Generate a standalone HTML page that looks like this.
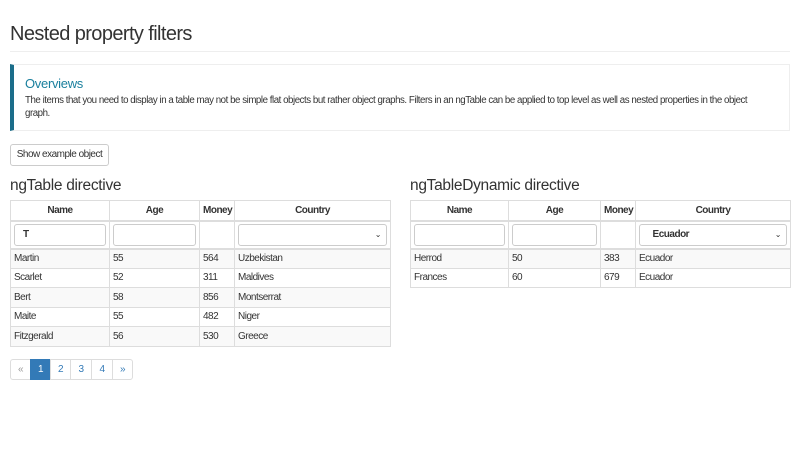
<!DOCTYPE html>
<html><head><style>
*{box-sizing:border-box;margin:0;padding:0}
body{width:800px;height:450px;background:#fff;font-family:"Liberation Sans",sans-serif;color:#333;position:relative;overflow:hidden;font-size:10px;letter-spacing:-0.5px}
.a{position:absolute}
h1{position:absolute;left:10px;top:23px;font-size:20px;letter-spacing:-0.6px;font-weight:normal;color:#333;white-space:nowrap}
.hr{left:10px;top:51px;width:780px;height:1px;background:#eee}
.call{left:10px;top:64px;width:780px;height:67px;border:1px solid #eee;border-left:4px solid #1b6d8a}
.call .t{position:absolute;left:11px;top:11px;font-size:13px;letter-spacing:-0.3px;color:#1b809e}
.call .p{position:absolute;left:11px;top:29px;font-size:9.7px;letter-spacing:-0.45px;line-height:13px;width:748px;color:#333}
.btn{left:10px;top:144px;width:99px;height:22px;border:1px solid #ccc;border-radius:3px;font-size:10px;line-height:20px;text-align:center;white-space:nowrap}
h3{position:absolute;font-size:15.5px;letter-spacing:-0.3px;font-weight:normal;top:177px;white-space:nowrap}
table{position:absolute;border-collapse:collapse;font-size:10px;table-layout:fixed}
td,th{border:1px solid #ddd;padding:0 3px;height:19.5px;white-space:nowrap;overflow:hidden}
th{text-align:center;font-weight:bold;height:20px;border-bottom:2px solid #ddd}
tr.f td{height:28px;padding:0 3px;border-bottom:2px solid #ddd}
tbody tr:nth-child(odd) td{background:#f9f9f9}
tbody tr:nth-child(even) td{background:#fff}
.in{height:22px;border:1px solid #ccc;border-radius:3px;background:#fff;position:relative;font-size:10px;line-height:20px;padding-left:8px;font-weight:bold}
.in .ch{position:absolute;right:5px;top:0;font-size:8px;font-weight:normal}
.pg{top:359px;height:21px;border:1px solid #ddd;text-align:center;line-height:19px;color:#337ab7;font-size:10px}
</style></head><body>
<h1>Nested property filters</h1>
<div class="a hr"></div>
<div class="a call"><div class="t">Overviews</div><div class="p">The items that you need to display in a table may not be simple flat objects but rather object graphs. Filters in an ngTable can be applied to top level as well as nested properties in the object graph.</div></div>
<div class="a btn">Show example object</div>
<h3 style="left:10px">ngTable directive</h3>
<h3 style="left:410px">ngTableDynamic directive</h3>
<table style="left:10px;top:200px;width:380px">
<colgroup><col style="width:99px"><col style="width:90px"><col style="width:35px"><col style="width:156px"></colgroup>
<thead><tr><th>Name</th><th>Age</th><th>Money</th><th>Country</th></tr>
<tr class="f"><td><div class="in">T</div></td><td><div class="in"></div></td><td></td><td><div class="in"><span class="ch">&#8964;</span></div></td></tr></thead>
<tbody>
<tr><td>Martin</td><td>55</td><td>564</td><td>Uzbekistan</td></tr>
<tr><td>Scarlet</td><td>52</td><td>311</td><td>Maldives</td></tr>
<tr><td>Bert</td><td>58</td><td>856</td><td>Montserrat</td></tr>
<tr><td>Maite</td><td>55</td><td>482</td><td>Niger</td></tr>
<tr><td>Fitzgerald</td><td>56</td><td>530</td><td>Greece</td></tr>
</tbody></table>
<table style="left:410px;top:200px;width:380px">
<colgroup><col style="width:98px"><col style="width:92px"><col style="width:35px"><col style="width:155px"></colgroup>
<thead><tr><th>Name</th><th>Age</th><th>Money</th><th>Country</th></tr>
<tr class="f"><td><div class="in"></div></td><td><div class="in"></div></td><td></td><td><div class="in">&nbsp;&nbsp;Ecuador<span class="ch">&#8964;</span></div></td></tr></thead>
<tbody>
<tr><td>Herrod</td><td>50</td><td>383</td><td>Ecuador</td></tr>
<tr><td>Frances</td><td>60</td><td>679</td><td>Ecuador</td></tr>
</tbody></table>
<div class="a pg" style="left:10px;width:21px;color:#999;border-radius:3px 0 0 3px">«</div>
<div class="a pg" style="left:30px;width:21px;background:#337ab7;border-color:#337ab7;color:#fff">1</div>
<div class="a pg" style="left:50px;width:21px">2</div>
<div class="a pg" style="left:70px;width:22px">3</div>
<div class="a pg" style="left:91px;width:22px">4</div>
<div class="a pg" style="left:112px;width:21px;border-radius:0 3px 3px 0">»</div>
</body></html>
